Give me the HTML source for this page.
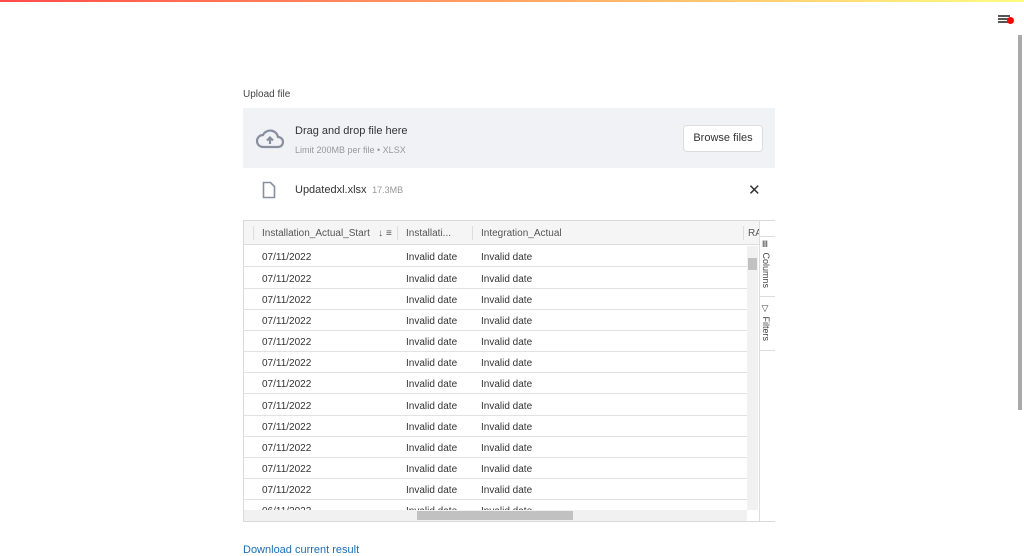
<!DOCTYPE html>
<html><head><style>
*{box-sizing:border-box;margin:0;padding:0}
body{width:1024px;height:552px;overflow:hidden;background:#fff;font-family:"Liberation Sans",sans-serif;color:#31333f;position:relative}
.top{position:absolute;left:0;top:0;width:1024px;height:2px;background:linear-gradient(90deg,#ff4b4b,#fffd80)}
.abs{position:absolute}
.row{position:absolute;left:244px;width:503px;height:21px;border-bottom:1px solid #e2e2e2;font-size:10px;color:#333}
.row span{position:absolute;top:6px}
</style></head><body>
<div class="top"></div>
<div class="abs" style="left:998px;top:15px;width:12px;height:2px;background:#555;box-shadow:0 3px 0 #555,0 6px 0 #555"></div>
<div class="abs" style="left:1007px;top:17px;width:7px;height:7px;border-radius:50%;background:#f00"></div>
<div class="abs" style="left:1018px;top:35px;width:4px;height:375px;background:#aaa"></div>

<div class="abs" style="left:243px;top:89px;font-size:10px;color:#444">Upload file</div>
<div class="abs" style="left:243px;top:108px;width:532px;height:60px;background:#f0f2f6"></div>
<svg class="abs" style="left:255px;top:128px" width="30" height="22" viewBox="0 0 30 22"><path d="M8 19h15a5 5 0 0 0 0-10 8 8 0 0 0-15-2A6 6 0 0 0 8 19z" fill="none" stroke="#8a8fa0" stroke-width="2.2"/><path d="M15 16v-6M12 12.5l3-3 3 3" fill="none" stroke="#8a8fa0" stroke-width="2.2"/></svg>
<div class="abs" style="left:295px;top:125px;font-size:11px;color:#333">Drag and drop file here</div>
<div class="abs" style="left:295px;top:145px;font-size:9px;color:#999">Limit 200MB per file • XLSX</div>
<div class="abs" style="left:683px;top:125px;width:80px;height:27px;background:#fff;border:1px solid #ddd;border-radius:4px;font-size:11px;text-align:center;line-height:25px;color:#333">Browse files</div>
<svg class="abs" style="left:262px;top:181px" width="14" height="18" viewBox="0 0 14 18"><path d="M1.5 1.5h7l4 4v11h-11z" fill="none" stroke="#8a8fa0" stroke-width="1.6"/></svg>
<div class="abs" style="left:295px;top:184px;font-size:11px;color:#333">Updatedxl.xlsx <span style="font-size:9px;color:#999">&nbsp;17.3MB</span></div>
<div class="abs" style="left:748px;top:181px;font-size:15px;color:#333">✕</div>

<div class="abs" style="left:243px;top:220px;width:532px;height:302px;border:1px solid #d9d9d9;background:#fff"></div>
<div class="abs" style="left:244px;top:221px;width:515px;height:24px;background:#f5f5f5;border-bottom:1px solid #ddd;font-size:10px;color:#555">
<span class="abs" style="left:9px;top:5px;width:1px;height:14px;background:#ddd"></span>
<span class="abs" style="left:18px;top:7px">Installation_Actual_Start&nbsp;&nbsp; ↓ ≡</span>
<span class="abs" style="left:153px;top:5px;width:1px;height:14px;background:#ddd"></span>
<span class="abs" style="left:162px;top:7px">Installati...</span>
<span class="abs" style="left:228px;top:5px;width:1px;height:14px;background:#ddd"></span>
<span class="abs" style="left:237px;top:7px">Integration_Actual</span>
<span class="abs" style="left:499px;top:5px;width:1px;height:14px;background:#ddd"></span>
<span class="abs" style="left:504px;top:7px">RA</span>
</div>
<div class="row" style="top:246px"><span style="left:18px">07/11/2022</span><span style="left:162px">Invalid date</span><span style="left:237px">Invalid date</span></div>
<div class="row" style="top:268px"><span style="left:18px">07/11/2022</span><span style="left:162px">Invalid date</span><span style="left:237px">Invalid date</span></div>
<div class="row" style="top:289px"><span style="left:18px">07/11/2022</span><span style="left:162px">Invalid date</span><span style="left:237px">Invalid date</span></div>
<div class="row" style="top:310px"><span style="left:18px">07/11/2022</span><span style="left:162px">Invalid date</span><span style="left:237px">Invalid date</span></div>
<div class="row" style="top:331px"><span style="left:18px">07/11/2022</span><span style="left:162px">Invalid date</span><span style="left:237px">Invalid date</span></div>
<div class="row" style="top:352px"><span style="left:18px">07/11/2022</span><span style="left:162px">Invalid date</span><span style="left:237px">Invalid date</span></div>
<div class="row" style="top:373px"><span style="left:18px">07/11/2022</span><span style="left:162px">Invalid date</span><span style="left:237px">Invalid date</span></div>
<div class="row" style="top:395px"><span style="left:18px">07/11/2022</span><span style="left:162px">Invalid date</span><span style="left:237px">Invalid date</span></div>
<div class="row" style="top:416px"><span style="left:18px">07/11/2022</span><span style="left:162px">Invalid date</span><span style="left:237px">Invalid date</span></div>
<div class="row" style="top:437px"><span style="left:18px">07/11/2022</span><span style="left:162px">Invalid date</span><span style="left:237px">Invalid date</span></div>
<div class="row" style="top:458px"><span style="left:18px">07/11/2022</span><span style="left:162px">Invalid date</span><span style="left:237px">Invalid date</span></div>
<div class="row" style="top:479px"><span style="left:18px">07/11/2022</span><span style="left:162px">Invalid date</span><span style="left:237px">Invalid date</span></div>
<div class="row" style="top:500px;height:10px;overflow:hidden;border:none"><span style="left:18px">06/11/2022</span><span style="left:162px">Invalid date</span><span style="left:237px">Invalid date</span></div>
<div class="abs" style="left:747px;top:246px;width:11px;height:264px;background:#f1f1f1"></div>
<div class="abs" style="left:748px;top:258px;width:9px;height:12px;background:#c1c1c1"></div>
<div class="abs" style="left:244px;top:510px;width:503px;height:11px;background:#f1f1f1"></div>
<div class="abs" style="left:417px;top:511px;width:156px;height:9px;background:#c1c1c1"></div>
<div class="abs" style="left:759px;top:221px;width:16px;height:300px;border-left:1px solid #ddd;background:#fff"></div>
<div class="abs" style="left:759px;top:236px;width:16px;height:1px;background:#ddd"></div>
<div class="abs" style="left:759px;top:296px;width:16px;height:1px;background:#ddd"></div>
<div class="abs" style="left:759px;top:350px;width:16px;height:1px;background:#ddd"></div>
<div class="abs" style="left:761px;top:240px;font-size:9px;color:#444;writing-mode:vertical-rl">Ⅲ Columns</div>
<div class="abs" style="left:761px;top:304px;font-size:9px;color:#444;writing-mode:vertical-rl">▽ Filters</div>

<div class="abs" style="left:243px;top:544px;font-size:11px;color:#1c6fb8">Download current result</div>
</body></html>
